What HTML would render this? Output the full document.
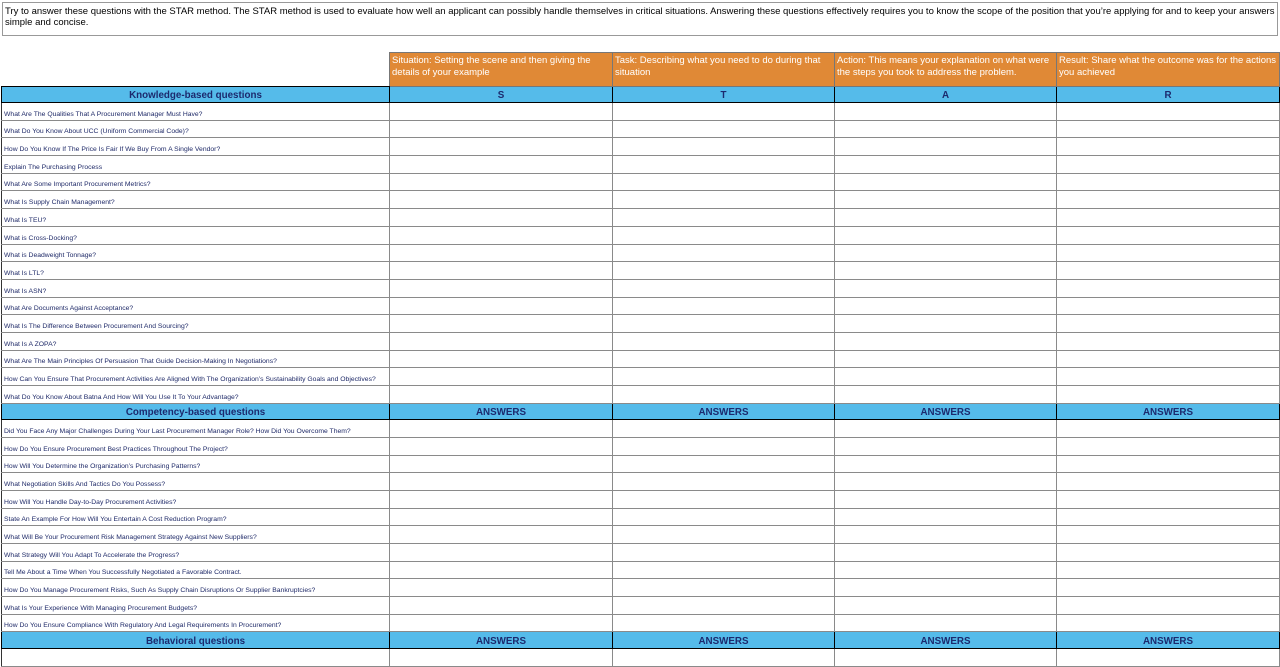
<!DOCTYPE html>
<html><head><meta charset="utf-8"><style>
body{margin:0;width:1280px;height:650px;overflow:hidden;background:#fff;font-family:"Liberation Sans",Arial,sans-serif;}
.intro{position:absolute;left:2px;top:2px;width:1276px;height:34px;border:1px solid #999;font-size:9.5px;line-height:11px;color:#000;padding:3px 0 0 2px;box-sizing:border-box;}
table{position:absolute;left:1px;top:52px;border-collapse:collapse;table-layout:fixed;}
td{padding:0 2px;overflow:hidden;white-space:nowrap;}
tr.o td{height:30.5px;background:#e08936;color:#fff;font-size:9.5px;line-height:11.5px;white-space:normal;vertical-align:top;border:1px solid #777;padding-top:2px;}
tr.o td.e{background:#fff;border:none;border-bottom:1px solid #000;}
tr.b td{height:13.5px;padding:2px 2px 0;background:#55bbea;color:#1c2a6e;font-weight:bold;font-size:9.8px;text-align:center;border:1.5px solid #000;vertical-align:middle;}
tr.r td{height:14.7px;border:1px solid #8a8a8a;font-size:6.8px;color:#1f2a68;vertical-align:bottom;padding-bottom:2px;}
tr.r td:first-child{border-left:1.5px solid #333;}
</style></head><body>
<div class="intro">Try to answer these questions with the STAR method. The STAR method is used to evaluate how well an applicant can possibly handle themselves in critical situations. Answering these questions effectively requires you to know the scope of the position that you’re applying for and to keep your answers simple and concise.</div>
<table>
<colgroup><col style="width:388px"><col style="width:223px"><col style="width:222px"><col style="width:222px"><col style="width:223px"></colgroup>
<tr class="o"><td class="e"></td><td>Situation: Setting the scene and then giving the details of your example</td><td>Task: Describing what you need to do during that situation</td><td>Action: This means your explanation on what were the steps you took to address the problem.</td><td>Result: Share what the outcome was for the actions you achieved</td></tr>
<tr class="b"><td>Knowledge-based questions</td><td>S</td><td>T</td><td>A</td><td>R</td></tr>
<tr class="r"><td>What Are The Qualities That A Procurement Manager Must Have?</td><td></td><td></td><td></td><td></td></tr>
<tr class="r"><td>What Do You Know About UCC (Uniform Commercial Code)?</td><td></td><td></td><td></td><td></td></tr>
<tr class="r"><td>How Do You Know If The Price Is Fair If We Buy From A Single Vendor?</td><td></td><td></td><td></td><td></td></tr>
<tr class="r"><td>Explain The Purchasing Process</td><td></td><td></td><td></td><td></td></tr>
<tr class="r"><td>What Are Some Important Procurement Metrics?</td><td></td><td></td><td></td><td></td></tr>
<tr class="r"><td>What Is Supply Chain Management?</td><td></td><td></td><td></td><td></td></tr>
<tr class="r"><td>What Is TEU?</td><td></td><td></td><td></td><td></td></tr>
<tr class="r"><td>What is Cross-Docking?</td><td></td><td></td><td></td><td></td></tr>
<tr class="r"><td>What is Deadweight Tonnage?</td><td></td><td></td><td></td><td></td></tr>
<tr class="r"><td>What Is LTL?</td><td></td><td></td><td></td><td></td></tr>
<tr class="r"><td>What Is ASN?</td><td></td><td></td><td></td><td></td></tr>
<tr class="r"><td>What Are Documents Against Acceptance?</td><td></td><td></td><td></td><td></td></tr>
<tr class="r"><td>What Is The Difference Between Procurement And Sourcing?</td><td></td><td></td><td></td><td></td></tr>
<tr class="r"><td>What Is A ZOPA?</td><td></td><td></td><td></td><td></td></tr>
<tr class="r"><td>What Are The Main Principles Of Persuasion That Guide Decision-Making In Negotiations?</td><td></td><td></td><td></td><td></td></tr>
<tr class="r"><td>How Can You Ensure That Procurement Activities Are Aligned With The Organization’s Sustainability Goals and Objectives?</td><td></td><td></td><td></td><td></td></tr>
<tr class="r"><td>What Do You Know About Batna And How Will You Use It To Your Advantage?</td><td></td><td></td><td></td><td></td></tr>
<tr class="b"><td>Competency-based questions</td><td>ANSWERS</td><td>ANSWERS</td><td>ANSWERS</td><td>ANSWERS</td></tr>
<tr class="r"><td>Did You Face Any Major Challenges During Your Last Procurement Manager Role? How Did You Overcome Them?</td><td></td><td></td><td></td><td></td></tr>
<tr class="r"><td>How Do You Ensure Procurement Best Practices Throughout The Project?</td><td></td><td></td><td></td><td></td></tr>
<tr class="r"><td>How Will You Determine the Organization’s Purchasing Patterns?</td><td></td><td></td><td></td><td></td></tr>
<tr class="r"><td>What Negotiation Skills And Tactics Do You Possess?</td><td></td><td></td><td></td><td></td></tr>
<tr class="r"><td>How Will You Handle Day-to-Day Procurement Activities?</td><td></td><td></td><td></td><td></td></tr>
<tr class="r"><td>State An Example For How Will You Entertain A Cost Reduction Program?</td><td></td><td></td><td></td><td></td></tr>
<tr class="r"><td>What Will Be Your Procurement Risk Management Strategy Against New Suppliers?</td><td></td><td></td><td></td><td></td></tr>
<tr class="r"><td>What Strategy Will You Adapt To Accelerate the Progress?</td><td></td><td></td><td></td><td></td></tr>
<tr class="r"><td>Tell Me About a Time When You Successfully Negotiated a Favorable Contract.</td><td></td><td></td><td></td><td></td></tr>
<tr class="r"><td>How Do You Manage Procurement Risks, Such As Supply Chain Disruptions Or Supplier Bankruptcies?</td><td></td><td></td><td></td><td></td></tr>
<tr class="r"><td>What Is Your Experience With Managing Procurement Budgets?</td><td></td><td></td><td></td><td></td></tr>
<tr class="r"><td>How Do You Ensure Compliance With Regulatory And Legal Requirements In Procurement?</td><td></td><td></td><td></td><td></td></tr>
<tr class="b"><td>Behavioral questions</td><td>ANSWERS</td><td>ANSWERS</td><td>ANSWERS</td><td>ANSWERS</td></tr>
<tr class="r"><td></td><td></td><td></td><td></td><td></td></tr>
</table>
</body></html>
